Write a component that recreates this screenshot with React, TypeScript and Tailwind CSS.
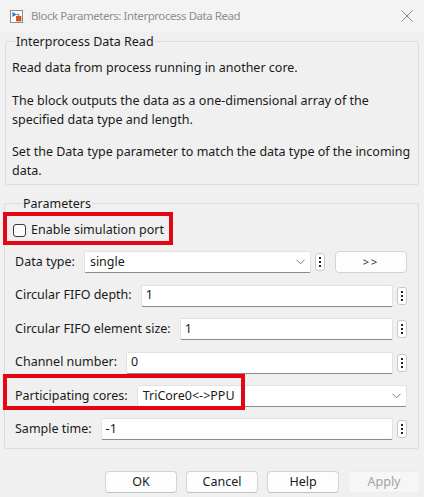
import React from "react";

const font = { fontFamily: '"Noto Sans", "Open Sans", sans-serif' };

function BlockIcon() {
  return (
    <svg width="13" height="13" viewBox="0 0 13 13">
      <rect x="0.5" y="0.5" width="12" height="12" fill="#fafafa" stroke="#8c8c8c" />
      <path d="M2.5 2 L2.5 7 L6.5 4.5 Z" fill="#1f7ad1" />
      <rect x="6.5" y="6.5" width="4.5" height="4.5" fill="#e2541f" stroke="#b13a12" strokeWidth="0.6" />
      <path d="M6.5 4.5 H8.7 V6.5" fill="none" stroke="#444" strokeWidth="0.7" />
    </svg>
  );
}

function Dots() {
  return (
    <div className="w-[10px] h-[18px] shrink-0 bg-white border border-[#c9c9c9] rounded-[3px] flex flex-col items-center justify-center gap-[2px]">
      <span className="w-[2px] h-[2px] bg-[#222]" />
      <span className="w-[2px] h-[2px] bg-[#222]" />
      <span className="w-[2px] h-[2px] bg-[#222]" />
    </div>
  );
}

function Chevron() {
  return (
    <svg width="9" height="6" viewBox="0 0 9 6" className="shrink-0">
      <path d="M0.5 0.8 L4.5 4.8 L8.5 0.8" fill="none" stroke="#7a7a7a" strokeWidth="1" />
    </svg>
  );
}

function TextField({ value }: { value: string }) {
  return (
    <div className="flex-1 h-[22px] bg-white border border-[#e2e2e2] border-b-[#8a8a8a] rounded-[2px] flex items-center pl-[4px] text-[12.5px] text-[#1a1a1a]">
      {value}
    </div>
  );
}

function Dropdown({ value }: { value: string }) {
  return (
    <div className="flex-1 h-[22px] bg-white border border-[#e2e2e2] border-b-[#8a8a8a] rounded-[2px] flex items-center justify-between pl-[5px] pr-[5px] text-[12.5px] text-[#1a1a1a]">
      <span>{value}</span>
      <Chevron />
    </div>
  );
}

function ParamRow({ label, children }: { label: string; children: React.ReactNode }) {
  return (
    <div className="flex items-center h-[22px]">
      <span className="text-[12.5px] text-[#1a1a1a] whitespace-nowrap mr-[9px]">{label}</span>
      {children}
    </div>
  );
}

function DlgButton({ label, disabled }: { label: string; disabled?: boolean }) {
  return (
    <div
      className={
        disabled
          ? "w-[72px] h-[22px] rounded-[4px] bg-[#f6f6f6] border border-[#ececec] flex items-center justify-center text-[12.5px] text-[#a3a3a3]"
          : "w-[72px] h-[22px] rounded-[4px] bg-[#fdfdfd] border border-[#d3d3d3] border-b-[#c2c2c2] flex items-center justify-center text-[12.5px] text-[#1a1a1a]"
      }
    >
      {label}
    </div>
  );
}

export default function App() {
  return (
    <div className="relative w-[424px] h-[497px] bg-[#f0f0f0] overflow-hidden flex flex-col" style={font}>
      {/* Title bar */}
      <div className="h-[32px] shrink-0 flex items-center pl-[10px] pr-[10px] bg-[#f3f3f3]">
        <BlockIcon />
        <span className="ml-[8px] text-[11.5px] tracking-[-0.45px] text-[#8e8e8e]">Block Parameters: Interprocess Data Read</span>
        <svg width="12" height="12" viewBox="0 0 12 12" className="ml-auto mr-[1px]">
          <path d="M0.5 0.5 L11.5 11.5 M11.5 0.5 L0.5 11.5" stroke="#8a8a8a" strokeWidth="1" />
        </svg>
      </div>

      {/* Description group */}
      <fieldset className="mx-[5px] border border-[#dcdcdc] rounded-[2px] px-[6px] pb-[4px] pt-[7px]">
        <legend className="ml-[3px] px-[1px] text-[12.5px] leading-[19px] text-[#1a1a1a]">Interprocess Data Read</legend>
        <div className="text-[12.5px] leading-[19px] text-[#1a1a1a] whitespace-nowrap">
          <p className="mb-[14px]">Read data from process running in another core.</p>
          <p className="mb-[13px]">
            The block outputs the data as a one-dimensional array of the
            <br />
            specified data type and length.
          </p>
          <p>
            Set the Data type parameter to match the data type of the incoming
            <br />
            data.
          </p>
        </div>
      </fieldset>

      {/* Parameters group */}
      <fieldset className="ml-[4px] mr-[5px] mt-[9px] border border-[#dcdcdc] rounded-[2px] pl-[10px] pr-[11px] pb-[8px] pt-[6px]">
        <legend className="ml-[7px] px-[1px] text-[12.5px] leading-[19px] text-[#1a1a1a]">Parameters</legend>
        <div className="flex flex-col gap-[11.4px]">
          <div className="flex items-center h-[22px] -ml-[2px] mb-[-1px]">
            <span className="w-[13px] h-[13px] rounded-[3px] border border-[#3a3a3a] bg-[#fbfbfb] shrink-0" />
            <span className="ml-[5px] text-[12.5px] text-[#1a1a1a]">Enable simulation port</span>
          </div>
          <ParamRow label="Data type:">
            <Dropdown value="single" />
            <div className="ml-[4px]">
              <Dots />
            </div>
            <div className="ml-[10px] w-[72px] h-[22px] shrink-0 rounded-[4px] bg-[#fdfdfd] border border-[#d3d3d3] flex items-center justify-center text-[11px] tracking-[2px] text-[#333]">
              &gt;&gt;
            </div>
          </ParamRow>
          <ParamRow label="Circular FIFO depth:">
            <TextField value="1" />
            <div className="ml-[4px]">
              <Dots />
            </div>
          </ParamRow>
          <ParamRow label="Circular FIFO element size:">
            <TextField value="1" />
            <div className="ml-[4px]">
              <Dots />
            </div>
          </ParamRow>
          <ParamRow label="Channel number:">
            <TextField value="0" />
            <div className="ml-[4px]">
              <Dots />
            </div>
          </ParamRow>
          <ParamRow label="Participating cores:">
            <Dropdown value="TriCore0<->PPU" />
          </ParamRow>
          <ParamRow label="Sample time:">
            <TextField value="-1" />
            <div className="ml-[4px]">
              <Dots />
            </div>
          </ParamRow>
        </div>
      </fieldset>

      {/* Buttons */}
      <div className="mt-auto mb-[4px] flex justify-end gap-[9px] pr-[4px]">
        <DlgButton label="OK" />
        <DlgButton label="Cancel" />
        <DlgButton label="Help" />
        <DlgButton label="Apply" disabled />
      </div>

      {/* Red annotation boxes */}
      <div className="absolute left-[3px] top-[212px] w-[170px] h-[33px] border-[4px] border-[#e30613] pointer-events-none" />
      <div className="absolute left-[3px] top-[374px] w-[242px] h-[36px] border-[4px] border-[#e30613] pointer-events-none" />
    </div>
  );
}
